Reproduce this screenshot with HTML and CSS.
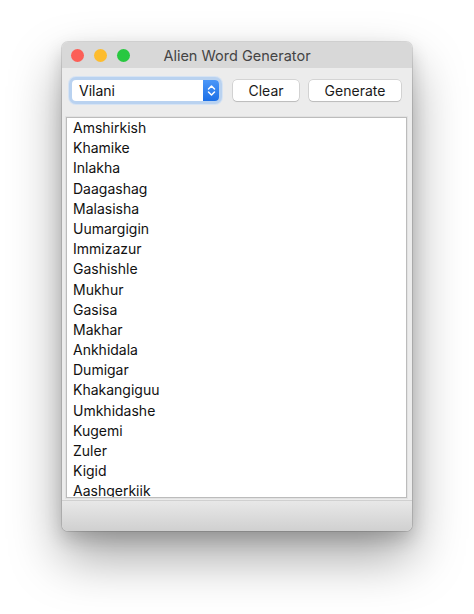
FILE: index.html
```html
<!DOCTYPE html>
<html>
<head>
<meta charset="utf-8">
<link rel="stylesheet" href="styles.css">
</head>
<body>
<div class="window">
  <div class="titlebar">
    <div class="lights">
      <span class="light red"></span>
      <span class="light yellow"></span>
      <span class="light green"></span>
    </div>
    <div class="title">Alien Word Generator</div>
  </div>
  <div class="toolbar">
    <div class="popup">
      <span class="popup-label">Vilani</span>
      <span class="stepper">
        <svg width="9" height="13" viewBox="0 0 9 13"><path d="M1.5 5 L4.5 2 L7.5 5 M1.5 8 L4.5 11 L7.5 8" fill="none" stroke="#fff" stroke-width="1.5" stroke-linecap="round" stroke-linejoin="round"/></svg>
      </span>
    </div>
    <button class="btn btn-clear">Clear</button>
    <button class="btn btn-generate">Generate</button>
  </div>
  <div class="list">
    <div class="item">Amshirkish</div>
    <div class="item">Khamike</div>
    <div class="item">Inlakha</div>
    <div class="item">Daagashag</div>
    <div class="item">Malasisha</div>
    <div class="item">Uumargigin</div>
    <div class="item">Immizazur</div>
    <div class="item">Gashishle</div>
    <div class="item">Mukhur</div>
    <div class="item">Gasisa</div>
    <div class="item">Makhar</div>
    <div class="item">Ankhidala</div>
    <div class="item">Dumigar</div>
    <div class="item">Khakangiguu</div>
    <div class="item">Umkhidashe</div>
    <div class="item">Kugemi</div>
    <div class="item">Zuler</div>
    <div class="item">Kigid</div>
    <div class="item">Aashgerkiik</div>
  </div>
  <div class="bottombar"></div>
</div>
</body>
</html>
```

FILE: styles.css
```css
html, body {
  margin: 0;
  padding: 0;
  background: #ffffff;
}
body {
  padding: 42px 0 0 62px;
  min-height: 614px;
  box-sizing: border-box;
  font-family: "Inter", "Roboto", "Liberation Sans", sans-serif;
  color: #1a1a1a;
}
.window {
  width: 350px;
  height: 489px;
  box-sizing: border-box;
  background: #ececec;
  border-radius: 6px;
  box-shadow: 0 0 0 1px rgba(0,0,0,0.12), 0 8px 18px rgba(0,0,0,0.16), 0 26px 52px rgba(0,0,0,0.36);
  display: flex;
  flex-direction: column;
  overflow: hidden;
}
.titlebar {
  height: 26px;
  flex: none;
  background: #d8d8d8;
  display: flex;
  align-items: center;
  position: relative;
}
.lights {
  display: flex;
  gap: 10px;
  padding-left: 9px;
}
.light {
  width: 13px;
  height: 13px;
  border-radius: 50%;
  display: block;
}
.red { background: #fc5f57; }
.yellow { background: #fdbc2e; }
.green { background: #28c840; }
.title {
  position: absolute;
  left: 0;
  right: 0;
  top: 0;
  bottom: 0;
  display: flex;
  align-items: center;
  justify-content: center;
  font-size: 14.5px;
  color: #444;
}
.toolbar {
  flex: none;
  display: flex;
  align-items: center;
  padding: 10px 0 0 10px;
  height: 24px;
}
.popup {
  width: 147px;
  height: 21px;
  background: #fff;
  border-radius: 4px;
  box-shadow: 0 0 0 3px #b9d2f0, 0 0 0 4px #d6e3f3;
  display: flex;
  align-items: center;
  overflow: hidden;
}
.popup-label {
  flex: 1;
  font-size: 14px;
  padding-left: 7px;
  color: #111;
}
.stepper {
  width: 16px;
  height: 21px;
  background: linear-gradient(#4b97f8, #1c6fe6);
  display: flex;
  align-items: center;
  justify-content: center;
}
.btn {
  font-family: inherit;
  font-size: 14px;
  color: #1a1a1a;
  background: #fff;
  border: none;
  border-radius: 4px;
  height: 21px;
  padding: 0;
  box-shadow: 0 0 0 0.5px rgba(0,0,0,0.2), 0 1px 1px rgba(0,0,0,0.12);
}
.btn-clear {
  width: 66px;
  margin-left: 14px;
}
.btn-generate {
  width: 92px;
  margin-left: 10px;
}
.list {
  flex: none;
  margin: 15px 0 0 4px;
  width: 341px;
  height: 381px;
  box-sizing: border-box;
  background: #fff;
  border: 1px solid #bcbcbc;
  box-shadow: 0 0 0 1px #e2e2e2;
  overflow: hidden;
  padding-top: 0;
}
.item {
  height: 20.2px;
  line-height: 20.2px;
  font-size: 14px;
  padding-left: 6px;
  color: #111;
}
.bottombar {
  flex: 1;
  margin-top: 2px;
  border-top: 1px solid #d0d0d0;
  background: linear-gradient(#e8e8e8, #d0d0d0);
}
```
